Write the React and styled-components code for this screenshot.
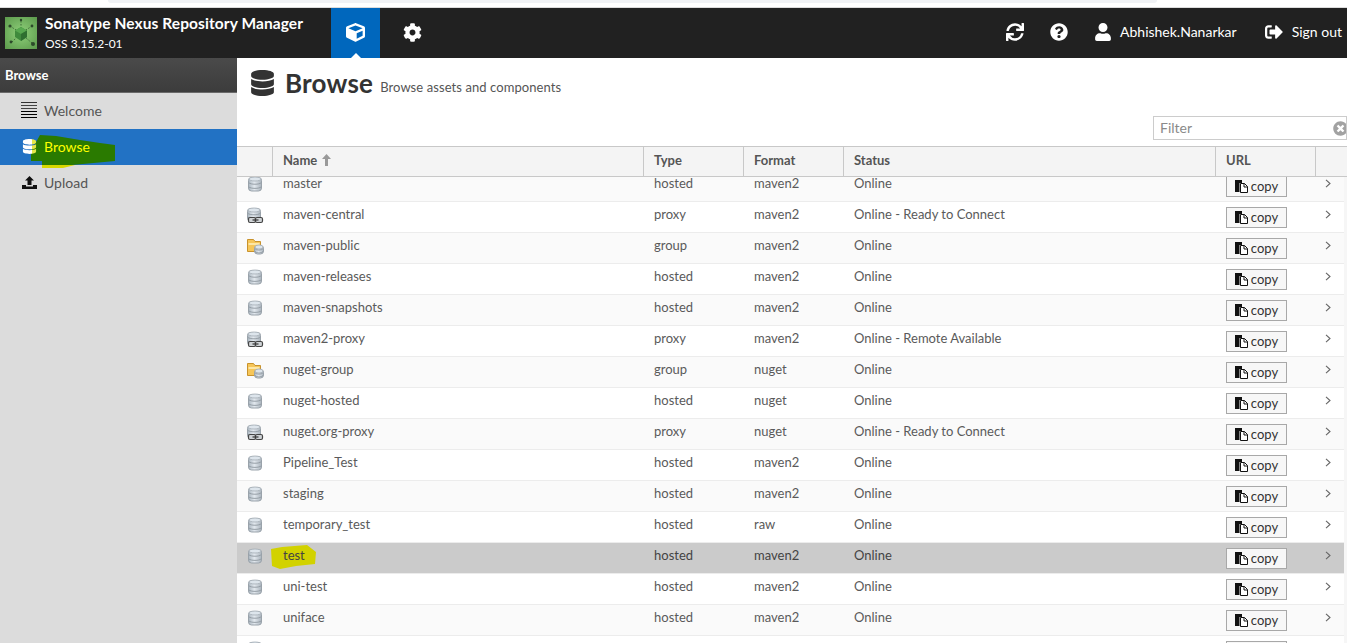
import React from "react";
import styled, { createGlobalStyle } from "styled-components";
import { FaCube, FaCog, FaSync, FaQuestionCircle, FaUser, FaSignOutAlt, FaDatabase, FaTimesCircle } from "react-icons/fa";

const Global = createGlobalStyle`
  html, body { margin: 0; padding: 0; height: 100%; overflow: hidden; background: #fff; }
  body { font-family: Lato, "Open Sans", "Liberation Sans", sans-serif; color: #4c4c4c; }
  * { box-sizing: border-box; }
`;

const Page = styled.div`
  width: 1347px; height: 643px; display: flex; flex-direction: column; overflow: hidden; background: #fff;
`;
const TopStrip = styled.div`
  height: 8px; flex: none; background: #fff; padding: 0 190px 0 108px;
  border-bottom: 1px solid #dcdcdc;
`;
const TabEdge = styled.div`
  height: 3px; background: #f0f2f5; border-radius: 0 0 8px 8px;
`;
const Header = styled.header`
  height: 50px; flex: none; background: #212121; display: flex; align-items: stretch; color: #fff;
`;
const Brand = styled.div`
  width: 331px; flex: none; display: flex; align-items: center; padding: 0 0 0 5px; gap: 8px;
`;
const BrandText = styled.div`
  display: flex; flex-direction: column; gap: 5px; padding-bottom: 1px;
`;
const BrandName = styled.div`
  font-size: 15.5px; font-weight: 700; line-height: 17px; white-space: nowrap; letter-spacing: .09px;
`;
const BrandVersion = styled.div`
  font-size: 12px; line-height: 13px; white-space: nowrap;
`;
const NavTab = styled.div`
  position: relative; width: ${p => p.$width}px; flex: none; display: flex; align-items: center; justify-content: center;
  background: ${p => (p.$active ? "#0067bd" : "transparent")};
  font-size: 19px; color: #fff; padding-bottom: 2px;
  ${p => p.$active && `
    &::after {
      content: ""; position: absolute; bottom: 0; left: 50%; margin-left: -5px;
      border: 5px solid transparent; border-top: 0; border-bottom-color: #fff;
    }
  `}
`;
const Spacer = styled.div`flex: 1;`;
const HeaderActions = styled.div`
  display: flex; align-items: center; padding: 0 5px 2px 0; font-size: 14px; line-height: 16px;
`;
const HeaderIcon = styled.span`
  display: inline-flex; font-size: 18px; margin-right: ${p => p.$gap || 0}px;
`;
const HeaderLabel = styled.span`
  margin-right: ${p => p.$gap || 0}px; white-space: nowrap;
`;
const Body = styled.div`
  flex: 1; display: flex; min-height: 0;
`;
const Sidebar = styled.aside`
  width: 237px; flex: none; background: #dcdcdc; display: flex; flex-direction: column;
`;
const SideHead = styled.div`
  height: 35px; background: linear-gradient(#4a4a4a, #3c3c3c); color: #fff; font-size: 13px; font-weight: 700;
  display: flex; align-items: center; padding-left: 5px; border-bottom: 1px solid #6a6a6a;
`;
const SideItem = styled.div`
  position: relative; height: 36px; display: flex; align-items: center; padding-left: 21px; gap: 7px;
  font-size: 14px; color: ${p => (p.$active ? "#ffff00" : "#555")};
  background: ${p => (p.$active ? "#2272c4" : "transparent")};
  padding-bottom: 2px;
`;
const SideIcon = styled.span`
  position: relative; z-index: 2; width: 16px; height: 16px; display: inline-flex; align-items: center; justify-content: center;
  font-size: 15px;
  color: ${p => (p.$active ? "#fff" : "#111")};
`;
const SideLabel = styled.span`position: relative; z-index: 2;`;
const Scribble = styled.svg`
  position: absolute; z-index: 1; left: ${p => p.$left}px; top: ${p => p.$top}px; display: block;
`;
const Main = styled.main`
  flex: 1; min-width: 0; display: flex; flex-direction: column; background: #fff;
`;
const TitleBar = styled.div`
  height: 58px; flex: none; display: flex; align-items: flex-start; padding: 11px 0 0 13px; color: #333;
`;
const TitleIcon = styled.span`
  display: inline-flex; font-size: 26px; width: 25px; margin-right: 10px; margin-top: 1px; color: #333;
`;
const Title = styled.h1`
  margin: 0; font-size: 26px; line-height: 28px; font-weight: 700; letter-spacing: .2px;
`;
const Subtitle = styled.span`
  font-size: 13px; color: #555; margin-left: 7px; margin-top: 10px; line-height: 16px; letter-spacing: .08px;
`;
const FilterRow = styled.div`
  height: 30px; flex: none; display: flex; justify-content: flex-end; align-items: flex-start; overflow: hidden;
`;
const FilterBox = styled.div`
  width: 194px; height: 24px; border: 1px solid #ccc; background: #fff; display: flex; align-items: center;
  justify-content: space-between; padding: 0 0 2px 6px; font-size: 14px; color: #8a8a8a;
  overflow: hidden;
`;
const FilterClear = styled.span`
  display: inline-flex; font-size: 15px; color: #a2a2a2; margin: 2px -2px 0 0;
`;
const Grid = styled.div`
  flex: 1; min-height: 0; display: flex; flex-direction: column; overflow: hidden; border-top: 1px solid #c8c8c8;
`;
const HeadRow = styled.div`
  position: relative; z-index: 1; height: 30px; flex: none; display: grid;
  grid-template-columns: 36px 371px 100px 100px 372px 100px 31px;
  background: #f4f4f4; border-bottom: 1px solid #c8c8c8;
`;
const HeadCell = styled.div`
  display: flex; align-items: center; padding: 0 0 4px 10px; gap: 5px; font-size: 13px; font-weight: 700; color: #555;
  border-right: ${p => (p.$last ? "none" : "1px solid #c8c8c8")};
`;
const RowsClip = styled.div`
  flex: 1; min-height: 0; overflow: hidden; background: #f6f6f6;
`;
const Rows = styled.div`
  margin-top: -6px; width: 1107px;
`;
const Row = styled.div`
  position: relative; height: 31px; display: grid;
  grid-template-columns: 36px 371px 100px 100px 372px 100px 28px;
  border-bottom: 1px solid #ececec;
  background: ${p => (p.$selected ? "#cbcbcb" : p.$odd ? "#fafafa" : "#fff")};
  font-size: 13px; color: ${p => (p.$selected ? "#444" : "#5a5a5a")};
`;
const Cell = styled.div`
  position: relative; z-index: 2; padding: 4px 0 0 10px; line-height: 16px; white-space: nowrap;
`;
const IconCell = styled.div`
  position: relative; z-index: 2; padding: 5px 0 0 10px;
`;
const CopyCell = styled.div`
  position: relative; z-index: 2; padding: 5px 0 0 10px;
`;
const CopyButton = styled.div`
  width: 61px; height: 21px; border: 1px solid #a8a8a8; background: #f7f7f7; display: flex; align-items: center;
  justify-content: center; gap: 3px; font-size: 13px; color: #333; line-height: 16px; padding-bottom: 1px;
`;
const Chevron = styled.div`
  position: relative; z-index: 2; padding: 8px 0 0 9px; line-height: 0;
`;

const Logo = () => (
  <svg width="32" height="32" viewBox="0 0 32 32">
    <defs>
      <radialGradient id="lg" cx="50%" cy="50%" r="70%"><stop offset="0" stopColor="#8fd07a" /><stop offset="1" stopColor="#5c9a4c" /></radialGradient>
    </defs>
    <rect width="32" height="32" fill="url(#lg)" />
    <g stroke="#3f6a38" strokeWidth="1" strokeDasharray="1.5 1.5">
      <line x1="16" y1="4" x2="16" y2="11" /><line x1="5" y1="9" x2="11" y2="13" /><line x1="27" y1="9" x2="21" y2="13" />
      <line x1="7" y1="25" x2="11" y2="21" /><line x1="27" y1="26" x2="21" y2="21" />
    </g>
    <g fill="#2c4a2a"><circle cx="16" cy="3" r="1.2" /><circle cx="5" cy="9" r="1.6" /><circle cx="27" cy="9" r="1.4" /><circle cx="6" cy="25" r="1.4" /><circle cx="28" cy="27" r="2" /></g>
    <path d="M16 10l6 3.5v6.5l-6 4-6-4v-6.5z" fill="#3f8a3c" />
    <path d="M16 10l6 3.5-6 3.5-6-3.5z" fill="#57a84f" />
    <path d="M16 17l6-3.5v6.5l-6 4z" fill="#2f7030" />
  </svg>
);

const Lines = () => (
  <svg width="16" height="16" viewBox="0 0 16 16" shapeRendering="crispEdges">
    {[0, 3, 6, 9, 12, 15].map((y, i) => (
      <rect key={y} x="0" y={y} width="16" height="1" fill={i === 0 ? "#333" : i < 3 ? "#444" : "#000"} />
    ))}
  </svg>
);

const UploadIcon = () => (
  <svg width="15" height="13" viewBox="0 0 15 13">
    <path d="M7.5 0L12 4.5H9.5V9h-4V4.5H3z" fill="#111" />
    <path d="M0 9h4v1.5h7V9h4v4H0z" fill="#111" />
  </svg>
);

const SortArrow = () => (
  <svg width="9" height="12" viewBox="0 0 9 12">
    <path d="M4.5 0L9 5H6v7H3V5H0z" fill="#999" />
  </svg>
);

const ChevronGlyph = () => (
  <svg width="6" height="9" viewBox="0 0 6 9">
    <path d="M1 .8L5 4.5 1 8.2" fill="none" stroke="#666" strokeWidth="1.1" />
  </svg>
);

const CopyGlyph = () => (
  <svg width="13" height="13" viewBox="0 0 13 13">
    <path d="M0 0h7v3H4.5v9H0z" fill="#111" />
    <path d="M5.5 3.5h4l3 3v6h-7z" fill="#fff" stroke="#111" />
    <path d="M9 3.5v3.5h3.5" fill="none" stroke="#111" />
  </svg>
);

const Cyl = ({ x = 0, y = 0, w = 14, h = 16, id }) => (
  <g transform={`translate(${x} ${y})`}>
    <rect x="0.5" y="1.5" width={w - 1} height={h - 2.5} rx="3" fill={`url(#${id})`} stroke="#9aa3ab" />
    <ellipse cx={w / 2} cy="3" rx={w / 2 - 1} ry="2" fill="#dde5ec" stroke="#a4adb5" strokeWidth=".8" />
    <path d={`M.8 ${h * 0.42}c2 2 ${w - 3.6} 2 ${w - 1.6} 0`} fill="none" stroke="#8e979f" strokeWidth=".9" />
    <path d={`M.8 ${h * 0.68}c2 2 ${w - 3.6} 2 ${w - 1.6} 0`} fill="none" stroke="#8e979f" strokeWidth=".9" />
  </g>
);

const Grad = ({ id }) => (
  <defs>
    <linearGradient id={id} x1="0" y1="0" x2="1" y2="0">
      <stop offset="0" stopColor="#aab6c0" /><stop offset=".45" stopColor="#e2e8ee" /><stop offset="1" stopColor="#aab4bd" />
    </linearGradient>
  </defs>
);

const HostedIcon = ({ k }) => (
  <svg width="16" height="17" viewBox="0 0 16 17">
    <Grad id={`h${k}`} />
    <Cyl x={1} y={0} w={14} h={16} id={`h${k}`} />
  </svg>
);

const ProxyIcon = ({ k }) => (
  <svg width="17" height="17" viewBox="0 0 17 17">
    <Grad id={`p${k}`} />
    <Cyl x={0} y={0} w={14} h={15} id={`p${k}`} />
    <rect x="1.5" y="10.5" width="7" height="5" rx="1.5" fill="#cfd3d6" stroke="#444" strokeWidth="1.2" />
    <rect x="8.5" y="10.5" width="7" height="5" rx="1.5" fill="#cfd3d6" stroke="#444" strokeWidth="1.2" />
    <line x1="5.5" y1="13" x2="11.5" y2="13" stroke="#333" strokeWidth="1.2" />
  </svg>
);

const GroupIcon = ({ k }) => (
  <svg width="17" height="17" viewBox="0 0 17 17">
    <Grad id={`g${k}`} />
    <path d="M.5 1.5h6l1.5 2h5.5v10H.5z" fill="#f6c659" stroke="#c8922c" />
    <path d="M1.5 5h11v2h-11z" fill="#fde7a6" />
    <Cyl x={7} y={6} w={10} h={11} id={`g${k}`} />
  </svg>
);

const rows = [
  ["hosted", "master", "hosted", "maven2", "Online"],
  ["proxy", "maven-central", "proxy", "maven2", "Online - Ready to Connect"],
  ["group", "maven-public", "group", "maven2", "Online"],
  ["hosted", "maven-releases", "hosted", "maven2", "Online"],
  ["hosted", "maven-snapshots", "hosted", "maven2", "Online"],
  ["proxy", "maven2-proxy", "proxy", "maven2", "Online - Remote Available"],
  ["group", "nuget-group", "group", "nuget", "Online"],
  ["hosted", "nuget-hosted", "hosted", "nuget", "Online"],
  ["proxy", "nuget.org-proxy", "proxy", "nuget", "Online - Ready to Connect"],
  ["hosted", "Pipeline_Test", "hosted", "maven2", "Online"],
  ["hosted", "staging", "hosted", "maven2", "Online"],
  ["hosted", "temporary_test", "hosted", "raw", "Online"],
  ["hosted", "test", "hosted", "maven2", "Online"],
  ["hosted", "uni-test", "hosted", "maven2", "Online"],
  ["hosted", "uniface", "hosted", "maven2", "Online"],
  ["hosted", "", "", "", ""],
];

const RepoIcon = ({ kind, k }) =>
  kind === "proxy" ? <ProxyIcon k={k} /> : kind === "group" ? <GroupIcon k={k} /> : <HostedIcon k={k} />;

export default function App() {
  return (
    <Page>
      <Global />
      <TopStrip><TabEdge /></TopStrip>
      <Header>
        <Brand>
          <Logo />
          <BrandText>
            <BrandName>Sonatype Nexus Repository Manager</BrandName>
            <BrandVersion>OSS 3.15.2-01</BrandVersion>
          </BrandText>
        </Brand>
        <NavTab $active $width={49}><FaCube /></NavTab>
        <NavTab $width={64}><FaCog /></NavTab>
        <Spacer />
        <HeaderActions>
          <HeaderIcon $gap={26}><FaSync /></HeaderIcon>
          <HeaderIcon $gap={26}><FaQuestionCircle /></HeaderIcon>
          <HeaderIcon $gap={8}><FaUser /></HeaderIcon>
          <HeaderLabel $gap={28}>Abhishek.Nanarkar</HeaderLabel>
          <HeaderIcon $gap={9}><FaSignOutAlt /></HeaderIcon>
          <HeaderLabel>Sign out</HeaderLabel>
        </HeaderActions>
      </Header>
      <Body>
        <Sidebar>
          <SideHead>Browse</SideHead>
          <SideItem><SideIcon><Lines /></SideIcon><SideLabel>Welcome</SideLabel></SideItem>
          <SideItem $active>
            <Scribble $left={31} $top={6} width="85" height="34" viewBox="0 0 85 34">
              <defs>
                <linearGradient id="dbSplit" x1="0" y1="0" x2="1" y2="0">
                  <stop offset=".66" stopColor="#fff" /><stop offset=".67" stopColor="#e6e64a" />
                </linearGradient>
              </defs>
              <path d="M0 16L9 0 25 1 49 5 69 8 84 10V26L41 30H11V26H0z" fill="#2a7a00" />
              <path d="M11 30H44L32 33H11z" fill="#d8d800" />
            </Scribble>
            <SideIcon $active><FaDatabase fill="url(#dbSplit)" /></SideIcon>
            <SideLabel>Browse</SideLabel>
          </SideItem>
          <SideItem><SideIcon><UploadIcon /></SideIcon><SideLabel>Upload</SideLabel></SideItem>
        </Sidebar>
        <Main>
          <TitleBar>
            <TitleIcon><FaDatabase /></TitleIcon>
            <Title>Browse</Title>
            <Subtitle>Browse assets and components</Subtitle>
          </TitleBar>
          <FilterRow>
            <FilterBox>Filter<FilterClear><FaTimesCircle /></FilterClear></FilterBox>
          </FilterRow>
          <Grid>
            <HeadRow>
              <HeadCell />
              <HeadCell>Name <SortArrow /></HeadCell>
              <HeadCell>Type</HeadCell>
              <HeadCell>Format</HeadCell>
              <HeadCell>Status</HeadCell>
              <HeadCell>URL</HeadCell>
              <HeadCell $last />
            </HeadRow>
            <RowsClip>
              <Rows>
                {rows.map((r, i) => (
                  <Row key={i} $odd={i % 2 === 0} $selected={r[1] === "test"}>
                    {r[1] === "test" && (
                      <Scribble $left={33} $top={1} width="47" height="26" viewBox="0 0 47 26">
                        <path d="M1 5L12 3 37 1 46 8 45 20 26 22 10 25 2 22z" fill="#d2d200" />
                      </Scribble>
                    )}
                    <IconCell><RepoIcon kind={r[0]} k={i} /></IconCell>
                    <Cell>{r[1]}</Cell>
                    <Cell>{r[2]}</Cell>
                    <Cell>{r[3]}</Cell>
                    <Cell>{r[4]}</Cell>
                    <CopyCell><CopyButton><CopyGlyph />copy</CopyButton></CopyCell>
                    <Chevron><ChevronGlyph /></Chevron>
                  </Row>
                ))}
              </Rows>
            </RowsClip>
          </Grid>
        </Main>
      </Body>
    </Page>
  );
}
